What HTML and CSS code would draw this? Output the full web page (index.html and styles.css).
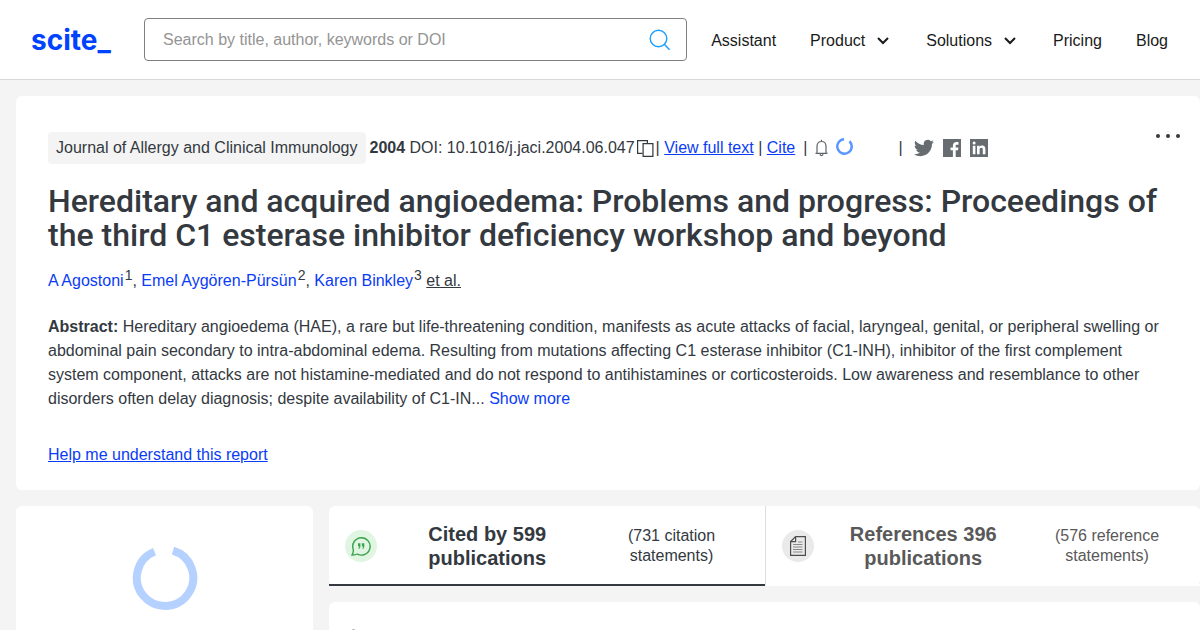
FILE: index.html
```html
<!DOCTYPE html>
<html lang="en">
<head>
<meta charset="utf-8">
<meta name="viewport" content="width=device-width, initial-scale=1">
<title>Hereditary and acquired angioedema - scite</title>
<link rel="stylesheet" href="styles.css">
</head>
<body>
<header class="topbar">
  <a class="logo" href="#">scite_</a>
  <form class="search" role="search">
    <input class="search-input" type="text" aria-label="Search" placeholder="Search by title, author, keywords or DOI">
    <button class="search-button" type="button" aria-label="Search">
      <svg width="22" height="22" viewBox="0 0 22 22" fill="none" stroke="#1a9fff" stroke-width="1.4"><circle cx="9.5" cy="9.5" r="8.3"/><path d="M15.3 15.3l5.3 5.5"/></svg>
    </button>
  </form>
  <nav class="nav">
    <a href="#">Assistant</a>
    <button type="button">Product <svg width="12" height="8" viewBox="0 0 12 8" fill="none" stroke="#1a1a1a" stroke-width="2"><path d="M1 1l5 5 5-5"/></svg></button>
    <button type="button">Solutions <svg width="12" height="8" viewBox="0 0 12 8" fill="none" stroke="#1a1a1a" stroke-width="2"><path d="M1 1l5 5 5-5"/></svg></button>
    <a href="#">Pricing</a>
    <a href="#">Blog</a>
  </nav>
</header>
<main class="page">
  <article class="card paper">
    <div class="meta-row">
      <div class="meta">
        <span class="journal">Journal of Allergy and Clinical Immunology</span>
        <span class="doi"><b>2004</b> DOI: 10.1016/j.jaci.2004.06.047</span>
        <button class="icon-button" type="button" aria-label="Copy DOI"><svg width="17" height="17" viewBox="0 0 17 17" fill="none" stroke="#33393f" stroke-width="1.2"><path d="M5.5 13.4H.6V.6h9.8v3"/><path d="M6.1 3.6h9.8v12.8H6.1z"/></svg></button>
        <span class="links">| <a href="#">View full text</a> | <a href="#">Cite</a></span>
        <span class="bar">|</span>
        <button class="icon-button bell" type="button" aria-label="Set alert"><svg width="13" height="18" viewBox="0 0 13 18" fill="none" stroke="#5f6468" stroke-width="1.2"><path d="M.5 14.4h12M2 14.2V7.5C2 4.500 3.800 2.500 6.500 2.500S11 4.500 11 7.500v6.700M6.500.8v1.700M5 14.800c0 2.400 3 2.400 3 0"/></svg></button>
        <svg class="spinner-small" width="17" height="17" viewBox="0 0 17 17" fill="none" stroke="#5a98ff" stroke-width="2.500"><path d="M9.900 1.400A7.200 7.200 0 1 1 4.300 2.600" transform="rotate(32 8.500 8.500)"/></svg>
        <span class="bar share-bar">|</span>
        <span class="share">
          <a href="#" aria-label="Twitter"><svg width="20" height="20" viewBox="0 0 24 24" fill="#666c70"><path d="M23.950 4.570a10 10 0 0 1-2.820.770 4.960 4.960 0 0 0 2.160-2.720c-.95.550-2 .95-3.130 1.180a4.920 4.920 0 0 0-8.380 4.480C7.690 8.090 4.070 6.130 1.640 3.160a4.820 4.820 0 0 0-.670 2.480c0 1.710.870 3.210 2.190 4.100a4.900 4.900 0 0 1-2.230-.620v.060a4.920 4.920 0 0 0 3.950 4.830 5 5 0 0 1-2.210.080 4.940 4.940 0 0 0 4.600 3.420A9.870 9.870 0 0 1 0 19.540a13.990 13.990 0 0 0 7.550 2.210c9.050 0 14-7.500 14-13.980 0-.210 0-.420-.020-.630a9.940 9.940 0 0 0 2.420-2.570z"/></svg></a>
          <a href="#" aria-label="Facebook"><svg width="18" height="18" viewBox="0 0 18 18"><path fill="#666c70" d="M0 0h18v18h-5.300v-6.700H15l.4-2.800h-2.700V7c0-.8.300-1.300 1.400-1.300h1.400V3.100c-.3 0-1.100-.1-2-.1-2.100 0-3.600 1.300-3.600 3.600v1.900H7.500v2.800h2.400V18H0z"/></svg></a>
          <a href="#" aria-label="LinkedIn"><svg width="18" height="18" viewBox="0 0 18 18"><path fill="#666c70" d="M0 0h18v18H0z"/><g fill="#fff"><circle cx="4.100" cy="4" r="1.500"/><path d="M2.800 6.800h2.600v8.400H2.800zM7 6.800h2.500V8c.5-.9 1.400-1.400 2.700-1.400 2.300 0 3.200 1.400 3.200 3.900v4.700h-2.600v-4.300c0-1.300-.3-2.100-1.500-2.100-1.300 0-1.700.9-1.700 2.100v4.300H7z"/></g></svg></a>
        </span>
      </div>
      <button class="icon-button more" type="button" aria-label="More"><svg width="26" height="6" viewBox="0 0 26 6" fill="#33393f"><circle cx="3" cy="3" r="2"/><circle cx="13" cy="3" r="2"/><circle cx="23" cy="3" r="2"/></svg></button>
    </div>
    <h1 class="title">Hereditary and acquired angioedema: Problems and progress: Proceedings of the third C1 esterase inhibitor deficiency workshop and beyond</h1>
    <p class="authors"><a href="#">A Agostoni</a><sup>1</sup>, <a href="#">Emel Aygören-Pürsün</a><sup>2</sup>, <a href="#">Karen Binkley</a><sup>3</sup> <button class="etal" type="button">et al.</button></p>
    <p class="abstract"><b>Abstract:</b> Hereditary angioedema (HAE), a rare but life-threatening condition, manifests as acute attacks of facial, laryngeal, genital, or peripheral swelling or abdominal pain secondary to intra-abdominal edema. Resulting from mutations affecting C1 esterase inhibitor (C1-INH), inhibitor of the first complement system component, attacks are not histamine-mediated and do not respond to antihistamines or corticosteroids. Low awareness and resemblance to other disorders often delay diagnosis; despite availability of C1-IN... <a href="#">Show more</a></p>
    <a class="help" href="#">Help me understand this report</a>
  </article>
  <div class="columns">
    <aside class="card side">
      <svg width="66" height="66" viewBox="0 0 66 66" fill="none" stroke="#b5d1ff" stroke-width="8"><path d="M41 5.700A28.200 28.200 0 1 1 22.500 6.600"/></svg>
    </aside>
    <div class="content">
      <div class="tabs">
        <button class="tab active" type="button">
          <span class="badge green"><svg width="20" height="20" viewBox="0 0 20 20" fill="none" stroke="#3aa24b" stroke-width="1.400"><path d="M2.200 13.200A8.700 8.700 0 1 1 6.200 18c-1.700.9-3.500 1-5.200.9 1.100-1.500 1.600-3.400 1.200-5.700z"/><path fill="#3aa24b" stroke="none" d="M7 7.200h2.400v3c0 1.500-.6 2.500-1.800 2.800v-1c.5-.3.700-.8.700-1.500H7zM10.900 7.200h2.400v3c0 1.500-.6 2.500-1.800 2.800v-1c.5-.3.700-.8.700-1.500h-1.300z"/></svg></span>
          <span class="tab-title">Cited by 599<br>publications</span>
          <span class="tab-note">(731 citation<br>statements)</span>
        </button>
        <button class="tab" type="button">
          <span class="badge gray"><svg width="16" height="20" viewBox="0 0 16 20" fill="none" stroke="#4d4d4d" stroke-width="1.200"><path d="M5.600.6h9.800v18.800H.6V5.600z M5.600.6v5h-5"/><path stroke="#888" d="M8 6h4.500M3 8.500h9.500M3 11h9.500M3 13.500h9.500M3 16h9.500"/></svg></span>
          <span class="tab-title">References 396<br>publications</span>
          <span class="tab-note">(576 reference<br>statements)</span>
        </button>
      </div>
      <section class="card results">
        <svg width="17" height="17" viewBox="0 0 17 17" fill="none" stroke="#999"><path d="M8.500 0L1 8M8.500 0L16 8"/></svg>
      </section>
    </div>
  </div>
</main>
</body>
</html>
```
FILE: styles.css
```css
* { box-sizing: border-box; }
body {
  margin: 0;
  background: #f4f4f4;
  color: #33393f;
  font: 16px/24px "Liberation Sans", Arial, sans-serif;
  height: 100vh;
  overflow: hidden;
}
a { color: #0a3cf5; }
button { padding: 0; border: 0; background: none; color: inherit; font: inherit; cursor: pointer; }
svg { display: block; flex: none; }
.topbar {
  display: flex;
  align-items: center;
  height: 80px;
  padding: 0 32px 0 31px;
  background: #fff;
  border-bottom: 1px solid #d8d8d8;
}
.logo { width: 113px; color: #0043ff; font: 700 28px/32px Inter, sans-serif; text-decoration: none; }
.search {
  display: flex;
  flex: 1;
  align-items: center;
  height: 43px;
  padding: 0 15px 0 18px;
  border: 1px solid #808080;
  border-radius: 4px;
}
.search-input { flex: 1; min-width: 0; padding: 0; border: 0; outline: 0; font: inherit; }
.search-input::placeholder { color: #949494; }
.nav { display: flex; gap: 34px; margin-left: 24px; padding-top: 2px; color: #1a1a1a; }
.nav a { color: inherit; text-decoration: none; }
.nav button { display: flex; align-items: center; gap: 12px; padding-right: 3px; }
.page { padding: 16px 0 0 16px; }
.card { background: #fff; border-radius: 6px; }
.paper { padding: 36px 32px 23px; }
.meta-row { display: flex; justify-content: space-between; align-items: flex-start; margin-right: -13px; }
.more { margin-top: 1px; }
.meta { display: flex; align-items: center; white-space: nowrap; }
.journal { padding: 4px 9px 4px 8px; margin-right: 3px; background: #f4f4f4; border-radius: 4px; }
.doi { margin-right: 2px; }
.links { margin: 0 8px 0 2px; }
.bell { margin: 0 8px; }
.spinner-small { margin-bottom: 4px; }
.share-bar { margin: 0 11px 0 45px; }
.share { display: flex; align-items: center; gap: 9px; }
.title { margin: 20px 0 0; font: 500 32px/34px Roboto, sans-serif; }
.authors { margin: 17px 0 0; }
.authors a, .abstract a { text-decoration: none; }
.authors sup { margin-left: 1px; font-size: 14px; line-height: 0; }
.etal { text-decoration: underline; }
.abstract { margin: 22px 0 32px; }
.columns { display: grid; grid-template-columns: 297px 1fr; gap: 16px; margin-top: 16px; }
.side { display: flex; justify-content: center; height: 400px; padding-top: 39px; }
.tabs { display: grid; grid-template-columns: 1fr 1fr; background: #fff; border-radius: 6px; }
.tab { display: flex; align-items: center; height: 80px; padding: 2px 15px 0 16px; color: #595959; border-left: 1px solid #dedede; border-bottom: 2px solid #fff; }
.tab.active { color: #33393f; border-left: 0; border-bottom-color: #33393f; }
.badge { display: grid; place-items: center; width: 32px; height: 32px; border-radius: 50%; }
.green { background: #e0f5e2; }
.gray { background: #eaeaea; }
.tab-title { flex: 1; padding-left: 4px; font-size: 20px; font-weight: 700; }
.tab-note { width: 156px; line-height: 20px; }
.results { height: 300px; margin-top: 16px; padding: 27px 16px; }
```
